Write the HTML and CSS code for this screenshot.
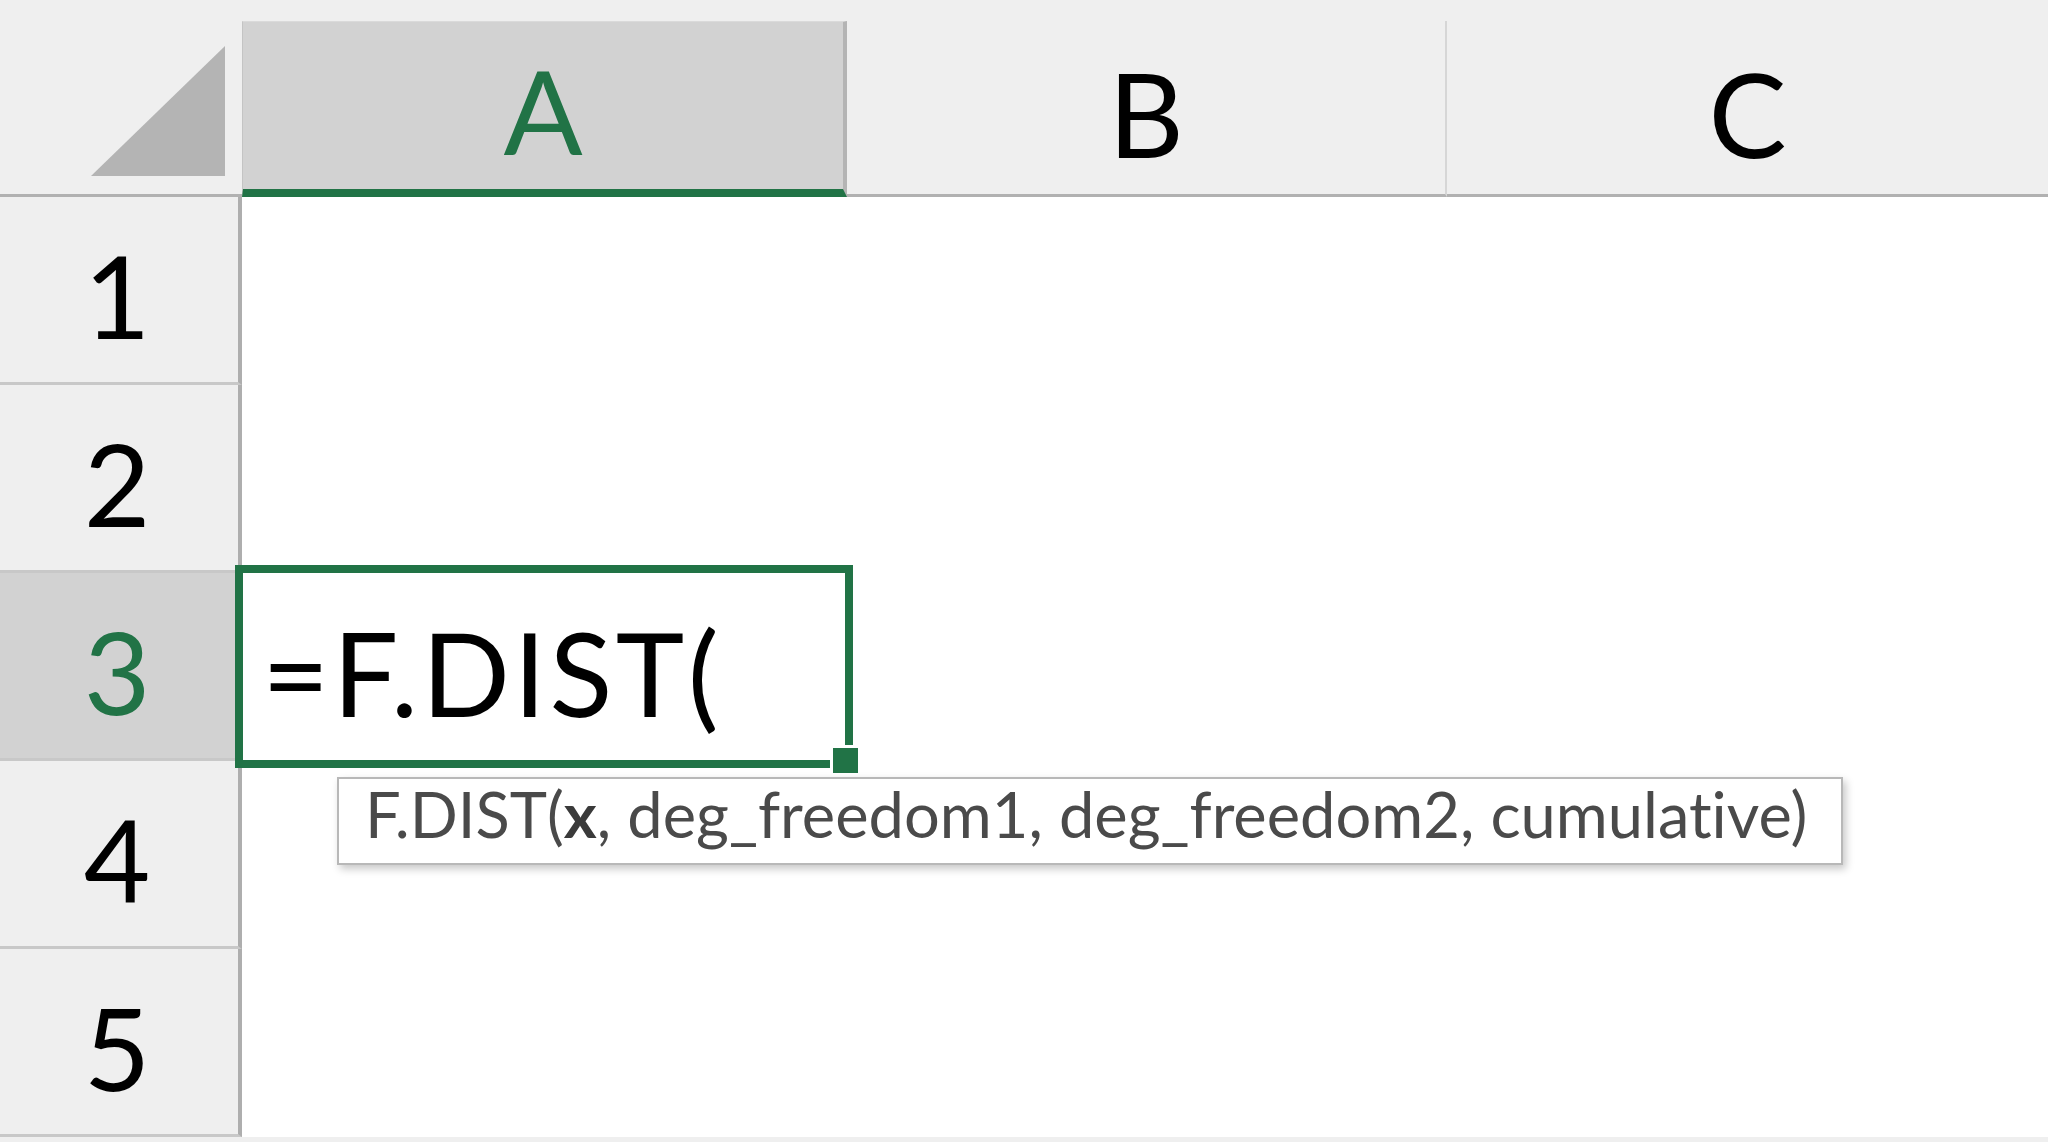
FILE: index.html
```html
<!DOCTYPE html>
<html>
    <head>
        <title>F.DIST</title>
        <meta charset="utf-8">
        <link rel="stylesheet" href="styles.css">
    </head>
    <body>
        <div class="sheet">
            <div class="corner">
                <svg class="corner-mark" width="134" height="130" viewBox="0 0 134 130">
                    <polygon points="0,130 134,130 134,0" fill="#b4b4b4"/>
                </svg>
            </div>
            <div class="col-head active">A</div>
            <div class="col-head">B</div>
            <div class="col-head last">C</div>

            <div class="row-head">1</div>
            <div class="cell"></div>
            <div class="cell"></div>
            <div class="cell"></div>

            <div class="row-head">2</div>
            <div class="cell"></div>
            <div class="cell"></div>
            <div class="cell"></div>

            <div class="row-head active">3</div>
            <div class="cell selected">
                <span class="entry">=F.DIST(</span>
                <div class="fill-handle"></div>
                <div class="tip">F.DIST(<b>x</b>, deg_freedom1, deg_freedom2, cumulative)</div>
            </div>
            <div class="cell"></div>
            <div class="cell"></div>

            <div class="row-head">4</div>
            <div class="cell"></div>
            <div class="cell"></div>
            <div class="cell"></div>

            <div class="row-head">5</div>
            <div class="cell"></div>
            <div class="cell"></div>
            <div class="cell"></div>
        </div>
    </body>
</html>
```

FILE: styles.css
```css
body{
    margin: 0px;
    padding: 0px;
    background: #efefef;
    overflow: hidden;
    font-family: Lato, "Noto Sans", sans-serif;
    font-variant-ligatures: none;
}
.sheet{
    display: grid;
    grid-template-columns: 242px 605px 600px 1fr;
    grid-template-rows: 197px repeat(5, 188px);
    height: 1142px;
}
.corner{
    margin-top: 21px;
    display: flex;
    justify-content: flex-end;
    align-items: flex-end;
    padding: 0 17px 18px 0;
    border-bottom: 3px solid #b1b1b1;
}
.corner-mark{
    display: block;
}
.col-head{
    margin-top: 21px;
    text-align: center;
    font-size: 117px;
    line-height: 169px;
    padding-top: 8px;
    box-sizing: border-box;
    color: #000000;
    border-bottom: 3px solid #b1b1b1;
    border-right: 2px solid #d6d6d6;
}
.col-head.active{
    background: #d2d2d2;
    color: #217346;
    border-top: 1px solid #dadada;
    border-left: 1px solid #c4c4c4;
    border-right: 4px solid #b4b4b4;
    border-bottom: 8px solid #217346;
    padding-top: 4px;
}
.col-head.last{
    border-right: none;
}
.row-head{
    font-size: 115px;
    line-height: 185px;
    padding-top: 5px;
    box-sizing: border-box;
    text-align: center;
    padding-right: 4px;
    background: #efefef;
    border-right: 4px solid #aeaeae;
    border-bottom: 3px solid #c8c8c8;
    color: #000000;
}
.row-head.active{
    background: #d2d2d2;
    color: #217346;
}
.cell{
    background: #ffffff;
}
.cell.selected{
    position: relative;
    font-size: 116px;
    line-height: 188px;
    padding-left: 20px;
    padding-top: 6px;
    box-sizing: border-box;
    white-space: nowrap;
    color: #000000;
}
.entry{
    letter-spacing: 3.5px;
}
.cell.selected::before{
    content: '';
    position: absolute;
    top: -8px;
    left: -7px;
    right: -6px;
    bottom: -7px;
    border: 8px solid #217346;
    pointer-events: none;
}
.fill-handle{
    position: absolute;
    left: 591px;
    top: 175px;
    width: 25px;
    height: 25px;
    background: #217346;
    box-shadow: 0 0 0 3px #ffffff;
    z-index: 2;
}
.tip{
    position: absolute;
    left: 95px;
    top: 204px;
    z-index: 3;
    height: 88px;
    box-sizing: border-box;
    padding: 0 34px 0 26px;
    font-size: 63.2px;
    line-height: 70px;
    letter-spacing: 0px;
    color: #4a4a4a;
    background: #ffffff;
    border: 2px solid #b8b8b8;
    box-shadow: 3px 4px 8px rgba(0,0,0,0.22);
    white-space: nowrap;
}
.tip b{
    font-weight: bold;
    color: #3a3a3a;
}
```
